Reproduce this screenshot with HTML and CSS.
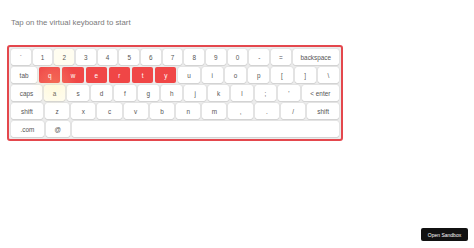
FILE: index.html
```html
<!DOCTYPE html>
<html>
<head>
<meta charset="utf-8">
<link rel="stylesheet" href="styles.css">
</head>
<body>
<div class="app">
  <p class="title">Tap on the virtual keyboard to start</p>
  <div class="keyboard">
    <div class="row">
      <div class="key std">`</div><div class="key std">1</div><div class="key std hint">2</div><div class="key std">3</div><div class="key std">4</div><div class="key std">5</div><div class="key std">6</div><div class="key std">7</div><div class="key std">8</div><div class="key std">9</div><div class="key std">0</div><div class="key std">-</div><div class="key std">=</div><div class="key fn">backspace</div>
    </div>
    <div class="row">
      <div class="key fn">tab</div><div class="key std active">q</div><div class="key std active">w</div><div class="key std active">e</div><div class="key std active">r</div><div class="key std active">t</div><div class="key std active">y</div><div class="key std">u</div><div class="key std">i</div><div class="key std">o</div><div class="key std">p</div><div class="key std">[</div><div class="key std">]</div><div class="key std">\</div>
    </div>
    <div class="row">
      <div class="key fn">caps</div><div class="key std hint">a</div><div class="key std">s</div><div class="key std">d</div><div class="key std">f</div><div class="key std">g</div><div class="key std">h</div><div class="key std">j</div><div class="key std">k</div><div class="key std">l</div><div class="key std">;</div><div class="key std">'</div><div class="key fn">&lt; enter</div>
    </div>
    <div class="row">
      <div class="key fn">shift</div><div class="key std">z</div><div class="key std">x</div><div class="key std">c</div><div class="key std">v</div><div class="key std">b</div><div class="key std">n</div><div class="key std">m</div><div class="key std">,</div><div class="key std">.</div><div class="key std">/</div><div class="key fn">shift</div>
    </div>
    <div class="row">
      <div class="key fn com">.com</div><div class="key std at">@</div><div class="key fn space"></div>
    </div>
    <div class="glow"></div>
  </div>
</div>
<a class="sandbox">Open Sandbox</a>
</body>
</html>
```
FILE: styles.css
```css
html, body {
  margin: 0;
  padding: 0;
  background: #fff;
  width: 474px;
  height: 248px;
  overflow: hidden;
  font-family: "Liberation Sans", Arial, sans-serif;
}

.app {
  padding: 18px 0 0 7px;
}

.title {
  margin: 0 0 17px 4px;
  font-size: 7.8px;
  line-height: 10px;
  color: #7a7a7a;
}

.keyboard {
  position: relative;
  width: 336px;
  box-sizing: border-box;
  border: 2px solid #e4474d;
  border-radius: 3px;
  background: #ececec;
  padding: 2px;
  overflow: hidden;
}

.row {
  display: flex;
}

.row + .row {
  margin-top: 2px;
}

.key {
  display: flex;
  align-items: center;
  justify-content: center;
  box-sizing: border-box;
  height: 16px;
  padding: 2px;
  flex-grow: 1;
  background: #fff;
  border-radius: 2px;
  box-shadow: 0 0 1.5px rgba(0, 0, 0, 0.18), 0 0.6px 0 #c9c9c9;
  font-size: 6.4px;
  color: #555;
  white-space: nowrap;
}

.key:not(:last-child) {
  margin-right: 2px;
}

.std {
  width: 8px;
}

.com {
  max-width: 32.8px;
}

.at {
  max-width: 24px;
}

.key.active {
  background: #f04646;
  color: #fff;
  box-shadow: none;
}

.key.hint {
  background: #fffdf0;
}

.glow {
  position: absolute;
  left: 22px;
  top: 14px;
  width: 46px;
  height: 46px;
  border-radius: 50%;
  background: radial-gradient(circle, rgba(255, 236, 140, 0.22) 0%, rgba(255, 240, 170, 0.1) 45%, rgba(255, 250, 220, 0) 70%);
  pointer-events: none;
}

.sandbox {
  position: fixed;
  right: 6px;
  bottom: 7px;
  width: 47px;
  height: 13px;
  box-sizing: border-box;
  background: #111;
  border-radius: 2px;
  color: #fff;
  font-size: 5px;
  display: flex;
  align-items: center;
  justify-content: center;
}
```
